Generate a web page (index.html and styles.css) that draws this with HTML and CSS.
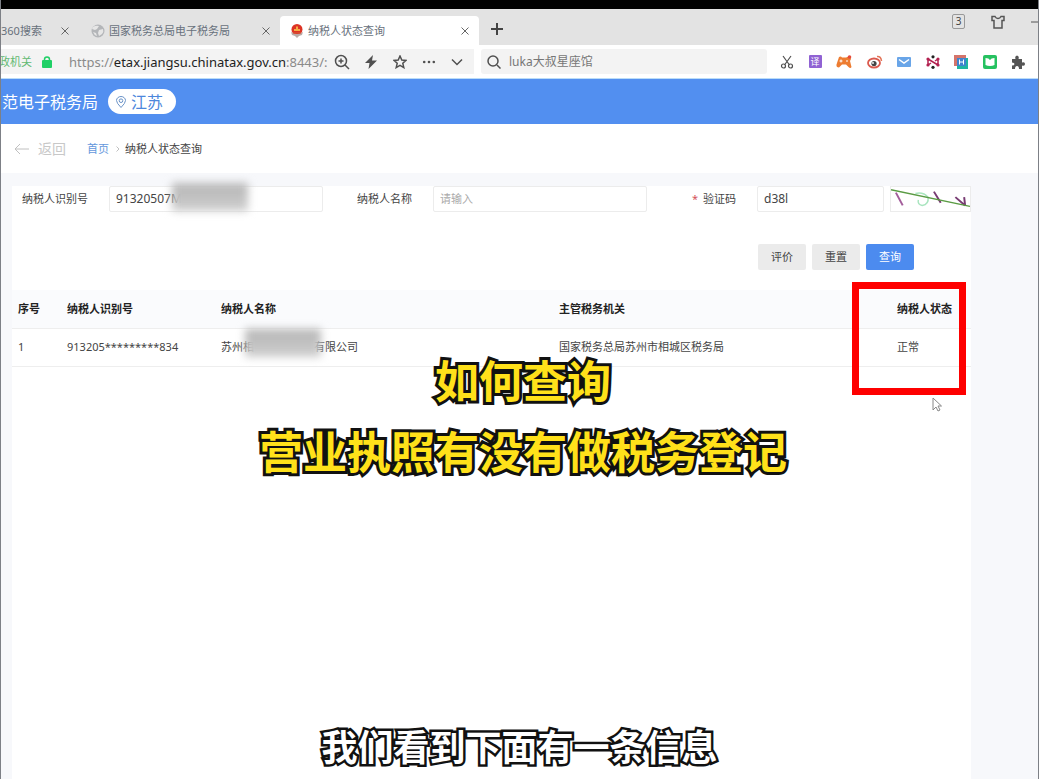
FILE: index.html
```
<!DOCTYPE html>
<html lang="zh-CN">
<head>
  <meta charset="UTF-8" />
  <title>纳税人状态查询</title>
  <link rel="stylesheet" href="styles.css">
</head>
<body>
  <div class="letterbox"></div>

  <div class="tab-bar">
    <div class="tab tab-first">
      <span class="tab-title">360搜索</span>
      <button class="tab-close" aria-label="关闭"><svg width="8" height="8" viewBox="0 0 8 8"><path d="M0.5 0.5l7 7M7.5 0.5l-7 7"/></svg></button>
    </div>
    <div class="tab tab-second">
      <svg width="14" height="14" viewBox="0 0 14 14"><circle cx="7" cy="7" r="6.5" fill="#b4b6b9"/><path d="M2 3q3-2 6-1L6 5 4 6 1 5zM8 6l4-1q1 3-1 5l-3 2-1-3zM2 8l3 1 1 3q-3-1-4-4z" fill="#e6e6e6"/></svg>
      <span class="tab-title">国家税务总局电子税务局</span>
      <button class="tab-close" aria-label="关闭"><svg width="8" height="8" viewBox="0 0 8 8"><path d="M0.5 0.5l7 7M7.5 0.5l-7 7"/></svg></button>
    </div>
    <div class="tab tab-active">
      <svg width="14" height="14" viewBox="0 0 14 14"><circle cx="7" cy="5.5" r="5.5" fill="#dd3324"/><path d="M4 5h6v2H4zM6 2.500h2v3H6z" fill="#f6ac45"/><path d="M1 8q6 4 12 0l-1 3-3 1-2 2-2-2-3-1z" fill="#b9aaa6"/><path d="M3 8h8v1.500H3z" fill="#d9472c"/></svg>
      <span class="tab-title">纳税人状态查询</span>
      <button class="tab-close" aria-label="关闭"><svg width="8" height="8" viewBox="0 0 8 8"><path d="M0.5 0.5l7 7M7.5 0.5l-7 7"/></svg></button>
    </div>
    <button class="new-tab" aria-label="新标签页"><svg width="12" height="12" viewBox="0 0 12 12"><path d="M6 0v12M0 6h12"/></svg></button>
    <div class="window-tools">
      <span class="tab-count">3</span>
      <svg width="14" height="14" viewBox="0 0 14 14"><path d="M4 1.500H1v4h2V13h8V5.500h2v-4h-3Q9 3.500 7 3.500T4 1.500z"/></svg>
      <svg width="7" height="14" viewBox="0 0 7 14"><path d="M0 7h7"/></svg>
    </div>
  </div>

  <div class="toolbar">
    <div class="address">
      <span class="site-type">政机关</span>
      <svg width="10" height="12" viewBox="0 0 10 12"><path d="M2.500 5V3.500q0-2.500 2.500-2.500t2.500 2.500V5" class="lock-bow"/><rect y="4" width="10" height="8" rx="1" fill="#1fd066" stroke="none"/></svg>
      <span class="url">https://<b>etax.jiangsu.chinatax.gov.cn</b>:8443/:</span>
      <div class="address-tools">
        <svg width="16" height="16" viewBox="0 0 16 16"><circle cx="7" cy="7" r="5.500"/><path d="M11 11l4 4M4.500 7h5M7 4.500v5"/></svg>
        <svg width="12" height="14" viewBox="0 0 12 14"><path d="M8 0L0 8h4.500L3.500 14 12 5.500H7z" fill="#505050" stroke="none"/></svg>
        <svg width="14" height="14" viewBox="0 0 14 14"><path d="M7 1l1.800 4 4.200.4-3.200 2.900 1 4.300L7 10.400l-3.800 2.200 1-4.300L1 5.400 5.200 5z"/></svg>
        <svg width="14" height="14" viewBox="0 0 14 14"><g fill="#505050" stroke="none"><circle cx="2.200" cy="7" r="1.300"/><circle cx="7" cy="7" r="1.300"/><circle cx="11.800" cy="7" r="1.300"/></g></svg>
        <svg width="12" height="12" viewBox="0 0 12 12"><path d="M1 3.500l5 5 5-5"/></svg>
      </div>
    </div>
    <div class="search">
      <svg width="14" height="14" viewBox="0 0 14 14"><circle cx="6" cy="6" r="5"/><path d="M10 10l3.500 3.500"/></svg>
      <input type="text" value="luka大叔星座馆" aria-label="搜索">
    </div>
    <div class="extensions">
      <svg width="14" height="14" viewBox="0 0 14 14"><path d="M3 1l6.500 9M11 1L4.500 10" stroke-width="1.200"/><circle cx="3.500" cy="11" r="2" stroke-width="1.200"/><circle cx="10.500" cy="11" r="2" stroke-width="1.200"/></svg>
      <span class="translate">译</span>
      <svg width="16" height="14" viewBox="0 0 16 14"><path d="M3 2q2-1 3 0.500h4L14 1l1 3-1 2 1.500 6q-1 2-3 0L10 9.500H6L3 12.500q-3 0-2.500-3z" fill="#ed7c31" stroke="none"/><path d="M3.500 6h3M5 4.500v3M10 6h2" stroke="#fff" stroke-width="1"/><circle cx="13.500" cy="2" r="1.800" fill="#e64a3b" stroke="none"/></svg>
      <svg width="16" height="14" viewBox="0 0 16 14"><ellipse cx="7" cy="8" rx="6" ry="4.500" fill="#fff" stroke="#db5a4e" stroke-width="1.800"/><circle cx="7" cy="8.500" r="2.600" fill="#444" stroke="none"/><circle cx="6" cy="8" r="0.900" fill="#fff" stroke="none"/><path d="M10 1.500q4-0.500 4.500 4.500" stroke="#e37558" stroke-width="1.500"/></svg>
      <svg width="14" height="12" viewBox="0 0 14 12"><rect y="1" width="14" height="10" rx="1" fill="#69a5e8" stroke="none"/><path d="M2 3.500l5 3.500 5-3.500" stroke="#fff"/></svg>
      <svg width="14" height="14" viewBox="0 0 14 14"><path d="M2 4v6M2 4l10 6M12 4v6M2 10l3-2M12 4L9 6" stroke="#b32150"/><g fill="#b32150" stroke="none"><circle cx="2" cy="4" r="1.600"/><circle cx="12" cy="4" r="1.600"/><circle cx="2" cy="10" r="1.600"/><circle cx="12" cy="10" r="1.600"/></g><circle cx="7" cy="1.800" r="1.600" fill="#222" stroke="none"/><circle cx="7" cy="12.300" r="1.600" fill="#222" stroke="none"/></svg>
      <svg width="14" height="14" viewBox="0 0 14 14"><g stroke="none"><path d="M0 0h12v11H0z" fill="#d4746b"/><path d="M3 3h11v11H3z" fill="#20b4a0"/><path d="M3 3h9v8H3z" fill="#3f83cf"/></g><path d="M5.500 4.500v5M9.500 4.500v5M5.500 7h4" stroke="#fff" stroke-width="1"/></svg>
      <svg width="14" height="14" viewBox="0 0 14 14"><rect width="14" height="14" rx="2" fill="#26c160" stroke="none"/><path d="M2.500 3q3.500 0 4.500 2 1-2 4.500-2v7q-2 1-4.500 1T2.500 10z" fill="#fff" stroke="none"/></svg>
      <svg width="14" height="14" viewBox="0 0 14 14"><path d="M1 4h3.500q-1-3 1.500-3.500Q8.500 1 7.500 4H11v3.500q3-1 3 1.500t-3 1.500V14H8q0-3-2-3t-2 3H1v-3.500q2.500 0 2.500-1.500T1 7.500z" fill="#555" stroke="none"/></svg>
    </div>
  </div>

  <header class="site-header">
    <h1>范电子税务局</h1>
    <button class="region">
      <svg width="10" height="12" viewBox="0 0 10 12"><path d="M5 11.500Q0.500 7 0.500 4.500a4.500 4 0 0 1 9 0Q9.500 7 5 11.500z"/><circle cx="5" cy="4.700" r="1.800"/></svg>
      江苏
    </button>
  </header>

  <nav class="breadcrumb">
    <button class="back"><svg width="15" height="12" viewBox="0 0 15 12"><path d="M6 1L1 6l5 5M1 6h14"/></svg>返回</button>
    <a href="#">首页</a>
    <svg width="4" height="6" viewBox="0 0 4 6"><path d="M0.500 0.500L3 3 0.500 5.500"/></svg>
    <span>纳税人状态查询</span>
  </nav>

  <main class="page">
    <div class="card">
      <form class="query-form">
        <label for="taxpayer-id">纳税人识别号</label>
        <div class="field">
          <input id="taxpayer-id" type="text" value="91320507M">
          <span class="mosaic mosaic-id"></span>
        </div>
        <label for="taxpayer-name">纳税人名称</label>
        <input id="taxpayer-name" type="text" placeholder="请输入">
        <label for="captcha"><i class="required">*</i>验证码</label>
        <input id="captcha" type="text" value="d38l">
        <svg class="captcha-image" viewBox="0 0 81 26" preserveAspectRatio="none"><path d="M5 6l7 14" stroke="#a35d9b" stroke-width="2"/><path d="M25 7q8-2 13 4 1 8-6 9-5-1-4-6" stroke="#a9e5bf" stroke-width="1.500"/><path d="M44 5l7 12M66 11l10 9M75 11l1 9" stroke="#783c73" stroke-width="2"/><path d="M0 3q40 9 81 18" stroke="#5a9b43" stroke-width="1.500"/></svg>
      </form>

      <div class="actions">
        <button type="button">评价</button>
        <button type="button">重置</button>
        <button type="button" class="primary">查询</button>
      </div>

      <table>
        <thead>
          <tr>
            <th class="col-no">序号</th>
            <th class="col-id">纳税人识别号</th>
            <th class="col-name">纳税人名称</th>
            <th class="col-office">主管税务机关</th>
            <th class="col-status">纳税人状态</th>
          </tr>
        </thead>
        <tbody>
          <tr>
            <td>1</td>
            <td>913205*********834</td>
            <td><div class="company"><span>苏州相</span><span>有限公司</span><span class="mosaic mosaic-name"></span></div></td>
            <td>国家税务总局苏州市相城区税务局</td>
            <td class="status">正常<span class="highlight"></span><svg class="cursor" width="10" height="15" viewBox="0 0 10 15"><path d="M1 1v12l3-3 2 4 2-1-2-4h3.500z"/></svg></td>
          </tr>
        </tbody>
      </table>
    </div>
  </main>

  <div class="caption-title">
    <p>如何查询</p>
    <p>营业执照有没有做税务登记</p>
  </div>
  <p class="caption-sub">我们看到下面有一条信息</p>
</body>
</html>
```
FILE: styles.css
```
* {
  box-sizing: border-box;
  margin: 0;
  padding: 0;
}

body {
  min-height: 100vh;
  display: flex;
  flex-direction: column;
  position: relative;
  overflow: hidden;
  border: solid #7d8086;
  border-width: 0 1px;
  background-color: #f7f8fb;
  color: #444;
  font-family: 'Noto Sans', 'Noto Sans CJK SC', sans-serif;
  font-size: 11px;
  line-height: 16px;
}

button, input {
  font: inherit;
  color: inherit;
  border: none;
  background: none;
}

svg {
  flex: none;
  fill: none;
}

.letterbox {
  height: 9px;
  margin: 0 -1px;
  background-color: #000;
}

/* browser tabs */
.tab-bar {
  height: 36px;
  display: flex;
  background-color: #e3e3e3;
}

.tab {
  display: flex;
  align-items: center;
  gap: 4px;
  padding: 8px 10px 0 0;
  color: #68717c;
}

.tab-first {
  width: 78px;
}

.tab-second {
  width: 201px;
  padding-left: 12px;
}

.tab-active {
  width: 199px;
  margin-top: 7px;
  padding: 1px 10px 0;
  border-radius: 4px 4px 0 0;
  background-color: #fff;
}

.tab-title {
  flex: 1;
  white-space: nowrap;
}

.tab-close svg,
.new-tab svg {
  display: block;
  stroke: #666;
}

.new-tab {
  padding: 4px 12px 0;
}

.new-tab svg {
  stroke: #444;
  stroke-width: 2;
}

.window-tools {
  margin-left: auto;
  padding-bottom: 11px;
  display: flex;
  align-items: center;
  gap: 26px;
}

.window-tools svg {
  stroke: #555;
  stroke-width: 1.5;
}

.window-tools svg:last-child {
  stroke-width: 1;
}

.tab-count {
  width: 13px;
  height: 15px;
  border: 1px solid #999;
  border-radius: 2px;
  font-size: 10px;
  line-height: 13px;
  text-align: center;
}

/* address bar */
.toolbar {
  height: 34px;
  display: flex;
  align-items: center;
  gap: 7px;
  border-bottom: 1px solid #b9dcf8;
  background-color: #fff;
}

.toolbar svg {
  stroke: #505050;
  stroke-width: 1.5;
}

.toolbar .lock-bow {
  stroke: #1fd066;
}

.address {
  width: 473px;
  height: 25px;
  display: flex;
  align-items: center;
  background-color: #f3f3f3;
}

.site-type {
  width: 43px;
  margin-left: -2px;
  color: #62b972;
}

.url {
  width: 260px;
  margin-left: 17px;
  white-space: nowrap;
  color: #8a8a8a;
  font-size: 13px;
}

.url b {
  color: #222;
  font-weight: 400;
}

.address-tools {
  flex: 1;
  display: flex;
  align-items: center;
  justify-content: space-between;
  padding: 0 11px 0 5px;
}

.search {
  width: 286px;
  height: 25px;
  display: flex;
  align-items: center;
  gap: 8px;
  padding-left: 6px;
  border-radius: 3px;
  background-color: #f3f3f3;
}

.search input {
  flex: 1;
  min-width: 0;
  color: #777;
  font-size: 12px;
}

.extensions {
  flex: 1;
  display: flex;
  align-items: center;
  justify-content: space-between;
  padding: 0 13px 0 6px;
}

.translate {
  width: 13px;
  height: 13px;
  border-radius: 1px;
  background-color: #9062d3;
  color: #fff;
  font-size: 9px;
  line-height: 13px;
  text-align: center;
}

/* site header */
.site-header {
  height: 45px;
  display: flex;
  align-items: center;
  gap: 10px;
  padding-left: 1px;
  background-color: #528ff0;
}

.site-header h1 {
  color: #fff;
  font-size: 16px;
  font-weight: 400;
  line-height: 24px;
}

.region {
  height: 25px;
  display: flex;
  align-items: center;
  gap: 5px;
  padding: 0 13px 0 8px;
  border-radius: 13px;
  background-color: #fff;
  color: #4d87dc;
  font-size: 16px;
}

.region svg {
  stroke: #6b93c7;
}

.breadcrumb {
  height: 49px;
  display: flex;
  align-items: center;
  padding-left: 13px;
  background-color: #fff;
}

.breadcrumb .back {
  display: flex;
  align-items: center;
  gap: 9px;
  margin-right: 21px;
  color: #c8c8c8;
  font-size: 14px;
}

.breadcrumb svg {
  stroke: #c0c0c0;
}

.breadcrumb a {
  margin-right: 7px;
  color: #6397dc;
  text-decoration: none;
}

.breadcrumb span {
  margin-left: 5px;
}

/* query page */
.page {
  flex: 1;
  display: flex;
  padding: 13px 67px 0 11px;
}

.card {
  flex: 1;
  background-color: #fff;
}

.query-form {
  display: grid;
  grid-template-columns: 97px 214fr 110px 214fr 110px 127fr 87px;
  align-items: center;
}

.query-form label {
  padding-left: 10px;
}

.query-form label[for="taxpayer-name"] {
  padding-left: 34px;
}

.query-form label[for="captcha"] {
  padding-left: 45px;
}

.field {
  position: relative;
}

.query-form input {
  display: block;
  width: 100%;
  height: 26px;
  padding: 0 6px 2px;
  border: 1px solid #ececec;
  border-radius: 2px;
  font-size: 12px;
}

.query-form input::placeholder {
  color: #aaa;
  font-size: 11px;
}

.required {
  margin-right: 5px;
  color: #d4525a;
  font-style: normal;
}

.captcha-image {
  width: 81px;
  height: 26px;
  margin-left: 6px;
  border: 1px solid #ececec;
}

.mosaic {
  position: absolute;
  background: linear-gradient(#b5b5b5, #cfcfcf);
  filter: blur(4px);
}

.mosaic-id {
  top: -3px;
  left: 63px;
  width: 76px;
  height: 28px;
}

.mosaic-name {
  top: -15px;
  left: 24px;
  width: 76px;
  height: 28px;
}

.actions {
  display: flex;
  justify-content: flex-end;
  gap: 6px;
  padding: 32px 57px 20px 0;
}

.actions button {
  width: 48px;
  height: 26px;
  border-radius: 2px;
  background-color: #ebebeb;
}

.actions .primary {
  background-color: #4c8bef;
  color: #fff;
}

table {
  width: 100%;
  border-collapse: collapse;
  table-layout: fixed;
}

th, td {
  height: 38px;
  padding-left: 6px;
  border-bottom: 1px solid #eee;
  text-align: left;
  white-space: nowrap;
}

th {
  background-color: #fafbfd;
  color: #222;
  font-weight: 700;
}

.col-no {
  width: 49px;
}

.col-id {
  width: 154px;
}

.col-name {
  width: 338px;
}

.col-office {
  width: 338px;
}

.company {
  width: 137px;
  display: flex;
  justify-content: space-between;
  position: relative;
}

.company .mosaic-name {
  top: -10px;
}

.status {
  position: relative;
}

/* red frame round the status column */
.highlight {
  position: absolute;
  top: -47px;
  left: -39px;
  width: 114px;
  height: 113px;
  border: 7px solid #fe0000;
}

.cursor {
  position: absolute;
  top: 68px;
  left: 41px;
  fill: #fff;
  stroke: #888;
}

/* video captions */
.caption-title,
.caption-sub {
  position: absolute;
  left: 0;
  width: 100%;
  text-align: center;
  white-space: nowrap;
  font-family: 'Noto Sans CJK SC', sans-serif;
  font-weight: 700;
  -webkit-text-stroke: 6px #111;
  paint-order: stroke fill;
}

.caption-title {
  top: 344px;
  padding-left: 7px;
  color: #ffe11a;
  font-size: 44px;
  line-height: 71px;
}

.caption-sub {
  bottom: 7px;
  color: #fff;
  font-size: 36px;
  line-height: 54px;
  -webkit-text-stroke-width: 5px;
}
```
